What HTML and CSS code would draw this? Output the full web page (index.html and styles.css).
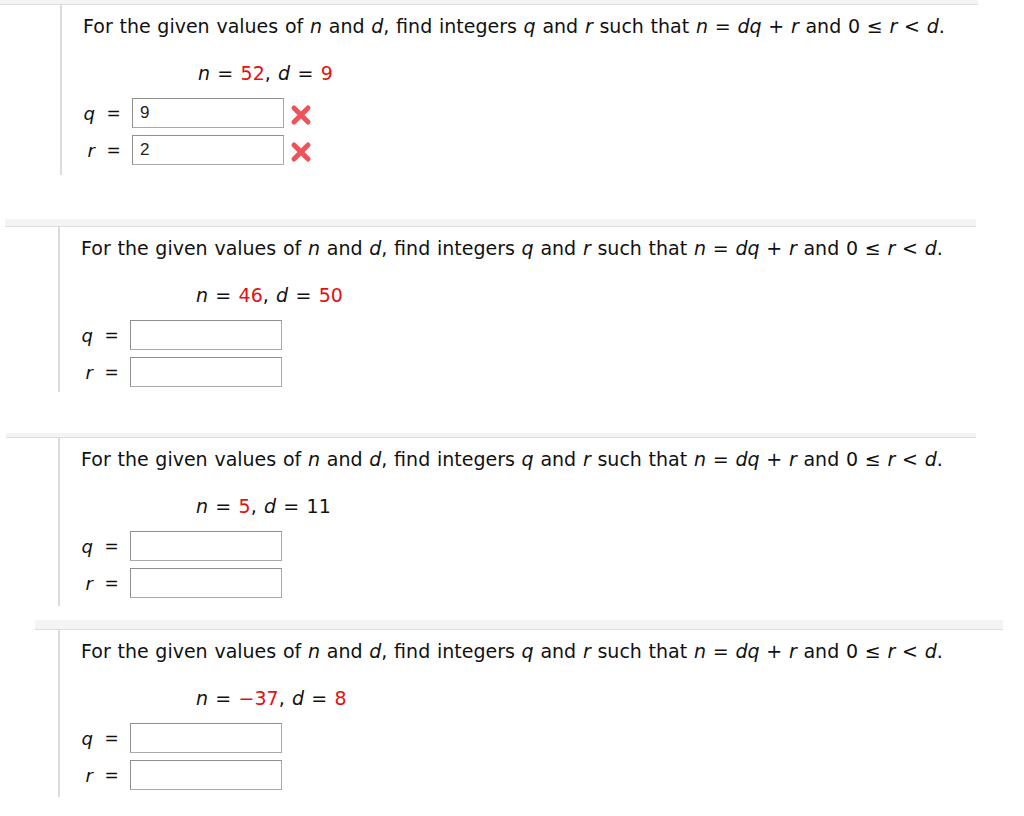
FILE: index.html
```html
<!DOCTYPE html>
<html>
<head>
<meta charset="utf-8">
<link rel="stylesheet" href="styles.css">
</head>
<body>
<div class="page">

  <section class="problem p1">
    <div class="sep"></div>
    <div class="body">
      <p class="question">For the given values of <i>n</i> and <i>d</i>, find integers <i>q</i> and <i>r</i> such that <i>n</i> = <i>dq</i> + <i>r</i> and 0 ≤ <i>r</i> &lt; <i>d</i>.</p>
      <p class="given"><i>n</i> = <span class="num">52</span>, <i>d</i> = <span class="num">9</span></p>
      <div class="row">
        <span class="lbl"><i>q</i></span><span class="eq">=</span><input class="ans" type="text" value="9"><svg class="wrong" viewBox="0 0 22 22"><path d="M4 4L18 18M18 4L4 18"/></svg>
      </div>
      <div class="row">
        <span class="lbl"><i>r</i></span><span class="eq">=</span><input class="ans" type="text" value="2"><svg class="wrong" viewBox="0 0 22 22"><path d="M4 4L18 18M18 4L4 18"/></svg>
      </div>
    </div>
  </section>

  <section class="problem p2">
    <div class="sep"></div>
    <div class="body">
      <p class="question">For the given values of <i>n</i> and <i>d</i>, find integers <i>q</i> and <i>r</i> such that <i>n</i> = <i>dq</i> + <i>r</i> and 0 ≤ <i>r</i> &lt; <i>d</i>.</p>
      <p class="given"><i>n</i> = <span class="num">46</span>, <i>d</i> = <span class="num">50</span></p>
      <div class="row">
        <span class="lbl"><i>q</i></span><span class="eq">=</span><input class="ans" type="text">
      </div>
      <div class="row">
        <span class="lbl"><i>r</i></span><span class="eq">=</span><input class="ans" type="text">
      </div>
    </div>
  </section>

  <section class="problem p3">
    <div class="sep"></div>
    <div class="body">
      <p class="question">For the given values of <i>n</i> and <i>d</i>, find integers <i>q</i> and <i>r</i> such that <i>n</i> = <i>dq</i> + <i>r</i> and 0 ≤ <i>r</i> &lt; <i>d</i>.</p>
      <p class="given"><i>n</i> = <span class="num">5</span>, <i>d</i> = 11</p>
      <div class="row">
        <span class="lbl"><i>q</i></span><span class="eq">=</span><input class="ans" type="text">
      </div>
      <div class="row">
        <span class="lbl"><i>r</i></span><span class="eq">=</span><input class="ans" type="text">
      </div>
    </div>
  </section>

  <section class="problem p4">
    <div class="sep"></div>
    <div class="body">
      <p class="question">For the given values of <i>n</i> and <i>d</i>, find integers <i>q</i> and <i>r</i> such that <i>n</i> = <i>dq</i> + <i>r</i> and 0 ≤ <i>r</i> &lt; <i>d</i>.</p>
      <p class="given"><i>n</i> = <span class="num">−37</span>, <i>d</i> = <span class="num">8</span></p>
      <div class="row">
        <span class="lbl"><i>q</i></span><span class="eq">=</span><input class="ans" type="text">
      </div>
      <div class="row">
        <span class="lbl"><i>r</i></span><span class="eq">=</span><input class="ans" type="text">
      </div>
    </div>
  </section>

</div>
</body>
</html>
```

FILE: styles.css
```css
html, body {
  margin: 0;
  padding: 0;
  background: #ffffff;
}

body {
  font-family: "DejaVu Sans", Verdana, sans-serif;
  font-size: 19px;
  color: #111111;
}

.page {
  width: 1024px;
}

.sep {
  background: #f4f4f4;
  border-bottom: 1px solid #dedede;
}

.p1 .sep { height: 4px; margin-left: 0; width: 978px; }
.p2 { margin-top: 44px; }
.p2 .sep { height: 7px; margin-left: 5px; width: 971px; }
.p3 { margin-top: 41px; }
.p3 .sep { height: 4px; margin-left: 6px; width: 970px; }
.p4 { margin-top: 14px; }
.p4 .sep { height: 9px; margin-left: 35px; width: 968px; }

.body {
  margin-left: 58px;
  border-left: 2px solid #dcdcdc;
  padding: 10px 0 7px 21px;
}

.p1 .body {
  margin-left: 60px;
  padding-bottom: 10px;
}

.p2 .body { padding-bottom: 5px; }
.p3 .body { padding-bottom: 8px; }

.question {
  margin: 0;
  line-height: 22px;
  white-space: nowrap;
  word-spacing: 0.7px;
}

.given {
  margin: 25px 0 14px 115px;
  line-height: 22px;
  word-spacing: 1.25px;
}

.num {
  color: #e51010;
}

.row {
  display: flex;
  align-items: center;
  height: 30px;
  margin-bottom: 7px;
}

.row:last-child {
  margin-bottom: 0;
}

.lbl {
  width: 12px;
  text-align: right;
  font-size: 18px;
}

.eq {
  width: 37px;
  text-align: center;
  font-size: 17px;
}

.ans {
  box-sizing: border-box;
  width: 152px;
  height: 30px;
  margin: 0;
  padding: 0 0 0 7px;
  border: 1px solid #a9a9a9;
  border-top-color: #8f8f8f;
  border-left-color: #8f8f8f;
  font-family: "Liberation Sans", Arial, sans-serif;
  font-size: 17px;
  color: #222222;
  background: #ffffff;
}

.wrong {
  width: 22px;
  height: 22px;
  margin: 4px 0 0 6px;
}

.wrong path {
  stroke: #f0525a;
  stroke-width: 5;
  stroke-linecap: round;
  fill: none;
}
```
